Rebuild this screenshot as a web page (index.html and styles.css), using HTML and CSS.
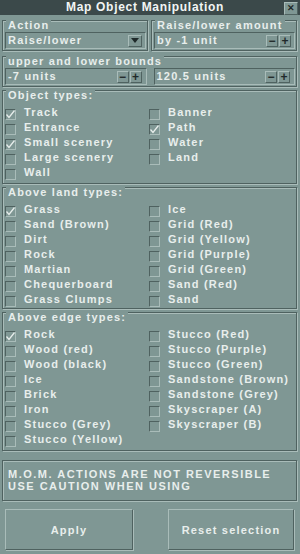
FILE: index.html
```html
<!DOCTYPE html>
<html>
<head>
<meta charset="utf-8">
<link rel="stylesheet" href="styles.css">
</head>
<body>
<div class="window">
  <header class="titlebar">
    <span class="title">Map Object Manipulation</span>
    <span class="close">&#x2715;</span>
  </header>
  <main class="content">
    <div class="top-row">
      <section class="group g-action">
        <div class="group-label">Action</div>
        <div class="field">
          <span class="field-text">Raise/lower</span>
          <span class="sbtn dd-btn"><svg width="8" height="5" viewBox="0 0 8 5"><polygon points="0,0 8,0 4,5" fill="#1f2a2a"/></svg></span>
        </div>
      </section>
      <section class="group g-amount">
        <div class="group-label">Raise/lower amount</div>
        <div class="field">
          <span class="field-text">by -1 unit</span>
          <span class="sbtn">&minus;</span><span class="sbtn">+</span>
        </div>
      </section>
    </div>

    <section class="group g-bounds">
      <div class="group-label">upper and lower bounds</div>
      <div class="bounds-grid">
        <div class="field">
          <span class="field-text">-7 units</span>
          <span class="sbtn">&minus;</span><span class="sbtn">+</span>
        </div>
        <div class="field">
          <span class="field-text">120.5 units</span>
          <span class="sbtn">&minus;</span><span class="sbtn">+</span>
        </div>
      </div>
    </section>

    <section class="group g-obj">
      <div class="group-label">Object types:</div>
      <div class="cb-grid">
        <div class="cb-col">
          <div class="cb"><span class="box on"></span>Track</div>
          <div class="cb"><span class="box"></span>Entrance</div>
          <div class="cb"><span class="box on"></span>Small scenery</div>
          <div class="cb"><span class="box"></span>Large scenery</div>
          <div class="cb"><span class="box"></span>Wall</div>
        </div>
        <div class="cb-col">
          <div class="cb"><span class="box"></span>Banner</div>
          <div class="cb"><span class="box on"></span>Path</div>
          <div class="cb"><span class="box"></span>Water</div>
          <div class="cb"><span class="box"></span>Land</div>
        </div>
      </div>
    </section>

    <section class="group g-land">
      <div class="group-label">Above land types:</div>
      <div class="cb-grid">
        <div class="cb-col">
          <div class="cb"><span class="box on"></span>Grass</div>
          <div class="cb"><span class="box"></span>Sand (Brown)</div>
          <div class="cb"><span class="box"></span>Dirt</div>
          <div class="cb"><span class="box"></span>Rock</div>
          <div class="cb"><span class="box"></span>Martian</div>
          <div class="cb"><span class="box"></span>Chequerboard</div>
          <div class="cb"><span class="box"></span>Grass Clumps</div>
        </div>
        <div class="cb-col">
          <div class="cb"><span class="box"></span>Ice</div>
          <div class="cb"><span class="box"></span>Grid (Red)</div>
          <div class="cb"><span class="box"></span>Grid (Yellow)</div>
          <div class="cb"><span class="box"></span>Grid (Purple)</div>
          <div class="cb"><span class="box"></span>Grid (Green)</div>
          <div class="cb"><span class="box"></span>Sand (Red)</div>
          <div class="cb"><span class="box"></span>Sand</div>
        </div>
      </div>
    </section>

    <section class="group g-edge">
      <div class="group-label">Above edge types:</div>
      <div class="cb-grid">
        <div class="cb-col">
          <div class="cb"><span class="box on"></span>Rock</div>
          <div class="cb"><span class="box"></span>Wood (red)</div>
          <div class="cb"><span class="box"></span>Wood (black)</div>
          <div class="cb"><span class="box"></span>Ice</div>
          <div class="cb"><span class="box"></span>Brick</div>
          <div class="cb"><span class="box"></span>Iron</div>
          <div class="cb"><span class="box"></span>Stucco (Grey)</div>
          <div class="cb"><span class="box"></span>Stucco (Yellow)</div>
        </div>
        <div class="cb-col">
          <div class="cb"><span class="box"></span>Stucco (Red)</div>
          <div class="cb"><span class="box"></span>Stucco (Purple)</div>
          <div class="cb"><span class="box"></span>Stucco (Green)</div>
          <div class="cb"><span class="box"></span>Sandstone (Brown)</div>
          <div class="cb"><span class="box"></span>Sandstone (Grey)</div>
          <div class="cb"><span class="box"></span>Skyscraper (A)</div>
          <div class="cb"><span class="box"></span>Skyscraper (B)</div>
        </div>
      </div>
    </section>

    <section class="group warning">
      <p>M.O.M. ACTIONS ARE NOT REVERSIBLE</p>
      <p>USE CAUTION WHEN USING</p>
    </section>

    <div class="actions">
      <button class="btn btn-apply">Apply</button>
      <button class="btn btn-reset">Reset selection</button>
    </div>
  </main>
</div>
</body>
</html>
```

FILE: styles.css
```css
:root {
  --bg: #7f9794;
  --dark: #4f6260;
  --light: #a9bcb9;
  --title: #3b494a;
  --text: #e8eeec;
  --glyph: #1f2a2a;
}

* { box-sizing: border-box; }

html, body {
  margin: 0;
  padding: 0;
  background: var(--bg);
}

body {
  font-family: "Liberation Sans", Arial, sans-serif;
  font-weight: bold;
  font-size: 11px;
  letter-spacing: 1.2px;
  color: var(--text);
}

.window {
  width: 300px;
  height: 554px;
  background: var(--bg);
  display: flex;
  flex-direction: column;
  overflow: hidden;
}

.titlebar {
  height: 15px;
  background: var(--title);
  display: flex;
  align-items: center;
  padding: 0 2px 0 6px;
}

.title {
  flex: 1;
  text-align: center;
  font-size: 12px;
  letter-spacing: 0.7px;
  line-height: 15px;
  color: #f2f5f4;
}

.close {
  width: 14px;
  height: 13px;
  margin-top: 1px;
  background: var(--bg);
  border-top: 1px solid var(--light);
  border-left: 1px solid var(--light);
  border-right: 1px solid var(--dark);
  border-bottom: 1px solid var(--dark);
  color: var(--glyph);
  font-size: 9px;
  letter-spacing: 0;
  line-height: 11px;
  text-align: center;
}

.content {
  flex: 1;
  display: flex;
  flex-direction: column;
  padding: 0 3px 0 2px;
}

.group {
  border: 1px solid var(--dark);
  box-shadow: inset 1px 1px 0 var(--light), 1px 1px 0 var(--light);
  margin-bottom: 1px;
}

.group-label {
  width: fit-content;
  margin: -2px 0 0 3px;
  padding: 0 2px;
  background: var(--bg);
  line-height: 12px;
  height: 12px;
  white-space: nowrap;
}

.top-row {
  display: grid;
  grid-template-columns: 146px 146px;
  column-gap: 3px;
  margin-top: 5px;
}

.g-action, .g-amount { padding-bottom: 1px; }

.g-action .field { margin: 1px 1px 0 2px; }
.g-amount .field { margin: 1px 1px 0 2px; }

.field {
  height: 17px;
  display: flex;
  align-items: center;
  border-top: 1px solid var(--dark);
  border-left: 1px solid var(--dark);
  border-right: 1px solid var(--light);
  border-bottom: 1px solid var(--light);
  padding: 0 3px 0 2px;
}

.field-text {
  flex: 1;
  line-height: 15px;
  white-space: nowrap;
}

.sbtn {
  width: 12px;
  height: 12px;
  margin-left: 1px;
  background: var(--bg);
  border-top: 1px solid var(--light);
  border-left: 1px solid var(--light);
  border-right: 1px solid var(--dark);
  border-bottom: 1px solid var(--dark);
  color: var(--glyph);
  font-size: 12px;
  letter-spacing: 0;
  line-height: 10px;
  text-align: center;
  display: flex;
  align-items: center;
  justify-content: center;
}

.dd-btn { width: 14px; margin-right: 0; }

.g-bounds {
  margin-top: 4px;
  padding-bottom: 1px;
}

.bounds-grid {
  display: grid;
  grid-template-columns: 1fr 1fr;
  column-gap: 7px;
  padding: 0 1px 0 2px;
  margin-top: 1px;
}

.g-bounds .field { padding-right: 4px; }

.g-obj { margin-top: 2px; padding-bottom: 3px; }
.g-land { margin-top: 2px; padding-bottom: 1px; }
.g-edge { margin-top: 2px; padding-bottom: 3px; }

.cb-grid {
  display: grid;
  grid-template-columns: 144px 144px;
  padding-left: 2px;
  margin-top: 4px;
}

.cb-col {
  display: flex;
  flex-direction: column;
}

.cb {
  height: 15px;
  line-height: 15px;
  display: flex;
  align-items: flex-start;
  gap: 8px;
  white-space: nowrap;
}

.box {
  flex: none;
  width: 11px;
  height: 11px;
  margin-top: 4px;
  border-top: 1px solid var(--dark);
  border-left: 1px solid var(--dark);
  border-right: 1px solid var(--light);
  border-bottom: 1px solid var(--light);
}

.box.on {
  background-image: url("data:image/svg+xml;utf8,<svg xmlns='http://www.w3.org/2000/svg' width='9' height='9' viewBox='0 0 9 9'><polyline points='0.5,4.5 3,7.5 8.5,0.5' fill='none' stroke='%23e8eeec' stroke-width='1.3'/></svg>");
  background-repeat: no-repeat;
  background-position: 0 0;
}

.warning {
  margin-top: 8px;
  padding: 7px 0 8px 5px;
  letter-spacing: 1.5px;
}

.warning p {
  margin: 0;
  line-height: 12px;
  white-space: nowrap;
}

.actions {
  display: flex;
  margin-top: 7px;
  padding: 0 3px 0 3px;
}

.btn {
  height: 41px;
  background: var(--bg);
  border-top: 1px solid var(--light);
  border-left: 1px solid var(--light);
  border-right: 1px solid var(--dark);
  border-bottom: 1px solid var(--dark);
  box-shadow: 1px 1px 0 var(--light);
  font-family: inherit;
  font-weight: bold;
  font-size: 11px;
  letter-spacing: 1.2px;
  color: var(--text);
  padding: 0;
}

.btn-apply { width: 128px; }
.btn-reset { width: 126px; margin-left: auto; }
```
